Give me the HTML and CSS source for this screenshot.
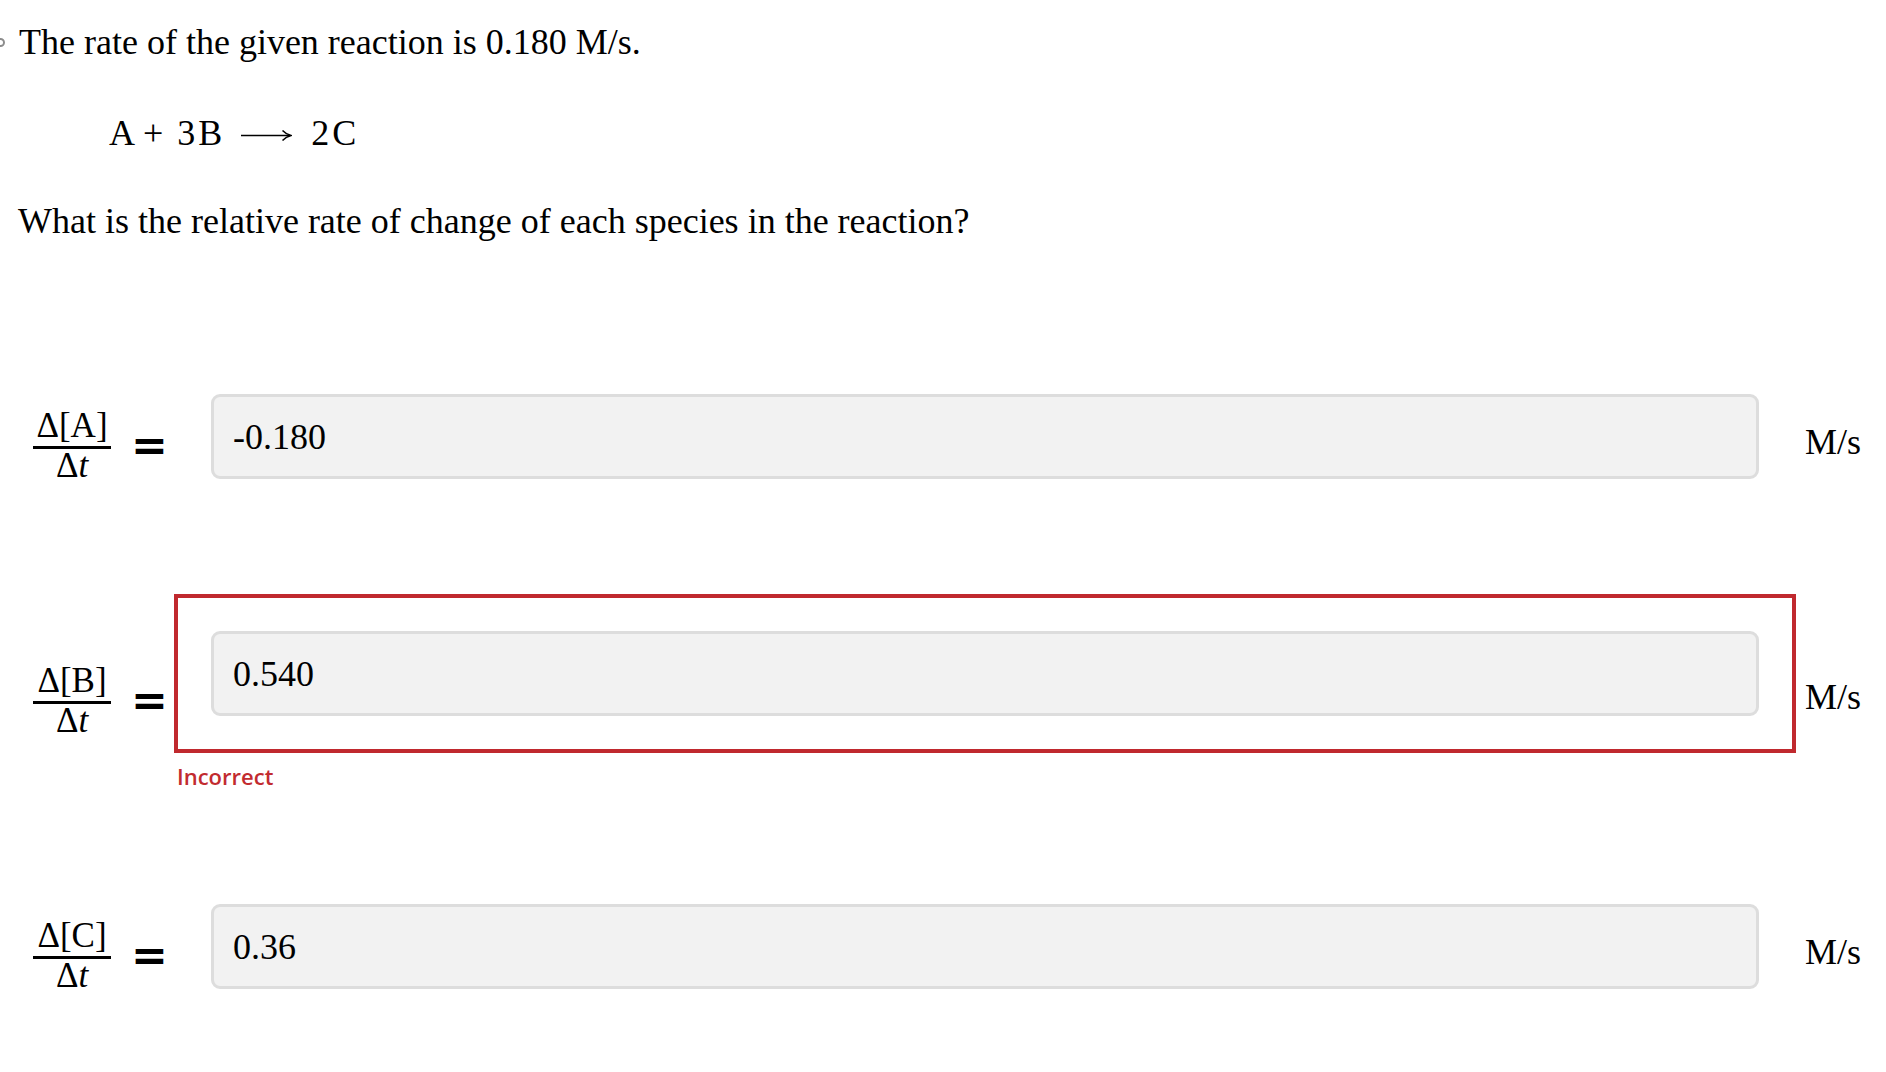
FILE: index.html
```html
<!DOCTYPE html>
<html lang="en">

<head>
    <meta charset="utf-8">
    <title>Reaction rate</title>

    <link rel="stylesheet" href="styles.css">
</head>

<body>

    <p class="lead"><span class="marker"></span>The rate of the given reaction is 0.180 M/s.</p>

    <!-- reaction equation -->
    <p class="equation"><span>A</span><span class="plus">+</span><span class="coef">3</span><span class="species">B</span><svg class="arrow" width="51" height="20" viewBox="0 0 51 20"><path d="M0 10.5H49" stroke="#000" stroke-width="1.6" fill="none"/><path d="M41.5 5.5Q45 9.2 50 10.5Q45 11.8 41.5 15.5" stroke="#000" stroke-width="1.5" fill="none"/></svg><span class="coef2">2</span><span class="species">C</span></p>

    <p class="question">What is the relative rate of change of each species in the reaction?</p>

    <div class="answers">

        <div class="row">
            <div class="math">
                <div class="frac">
                    <span class="num">Δ[A]</span>
                    <span class="den">Δ<i>t</i></span>
                </div>
                <span class="eq">=</span>
            </div>
            <div class="field">
                <div class="box">
                    <div class="answer">-0.180</div>
                </div>
            </div>
            <span class="unit">M/s</span>
        </div>

        <!-- wrong answer gets the red frame -->
        <div class="row wrong">
            <div class="math">
                <div class="frac">
                    <span class="num">Δ[B]</span>
                    <span class="den">Δ<i>t</i></span>
                </div>
                <span class="eq">=</span>
            </div>
            <div class="field">
                <div class="box">
                    <div class="answer">0.540</div>
                </div>
                <div class="feedback">Incorrect</div>
            </div>
            <span class="unit">M/s</span>
        </div>

        <div class="row">
            <div class="math">
                <div class="frac">
                    <span class="num">Δ[C]</span>
                    <span class="den">Δ<i>t</i></span>
                </div>
                <span class="eq">=</span>
            </div>
            <div class="field">
                <div class="box">
                    <div class="answer">0.36</div>
                </div>
            </div>
            <span class="unit">M/s</span>
        </div>

    </div>

</body>

</html>
```

FILE: styles.css
```css
* {
    box-sizing: border-box;
}

body {
    margin: 0;
    font-family: "Liberation Serif", "Times New Roman", serif;
    font-size: 36px;
    color: #000;
    background-color: #fff;
}

p {
    margin: 0;
    line-height: 43px;
}

.lead {
    margin: 21px 0 0 18px;
}

.marker {
    display: inline-block;
    width: 9px;
    height: 9px;
    margin-left: -22px;
    margin-right: 14px;
    border: 2px solid #8c8c8c;
    border-radius: 50%;
    vertical-align: 7px;
}

.equation {
    margin: 48px 0 0 109px;
}

.equation .plus {
    margin-left: 8px;
}

.equation .coef {
    margin-left: 14px;
}

.equation .species {
    margin-left: 3px;
}

.equation .arrow {
    margin-left: 19px;
    vertical-align: baseline;
}

.equation .coef2 {
    margin-left: 19px;
}

.question {
    margin: 45px 0 0 18px;
}

/* answer rows */
.answers {
    margin-top: 114px;
}

.row {
    display: flex;
    align-items: flex-start;
    margin-bottom: 78px;
}

.math {
    display: flex;
    align-items: flex-start;
    flex: none;
    width: 174px;
    padding-left: 33px;
}

.frac {
    display: flex;
    flex-direction: column;
    width: 78px;
    margin-top: 51px;
    font-size: 35px;
    text-align: center;
}

.frac .num {
    line-height: 35px;
    padding-bottom: 3px;
    border-bottom: 3px solid #000;
}

.frac .den {
    line-height: 30px;
    padding-top: 2px;
}

.eq {
    margin: 66px 0 0 20px;
    font: bold 44px/44px "DejaVu Sans", sans-serif;
}

.field {
    flex: none;
    width: 1622px;
}

.box {
    border: 4px solid transparent;
    padding: 33px;
}

.answer {
    display: flex;
    align-items: center;
    height: 85px;
    padding: 0 19px;
    border: 3px solid #dddddd;
    border-radius: 9px;
    background-color: #f2f2f2;
}

.unit {
    margin: 64px 0 0 9px;
    line-height: 43px;
}

.feedback {
    margin: 10px 0 0 3px;
    font: 600 22px/26px "Open Sans", sans-serif;
    color: #c22b2f;
}

.wrong .box {
    border-color: #c0292e;
}

.wrong .frac {
    margin-top: 69px;
}

.wrong .eq {
    margin-top: 84px;
}

.wrong .unit {
    margin-top: 82px;
}
```
